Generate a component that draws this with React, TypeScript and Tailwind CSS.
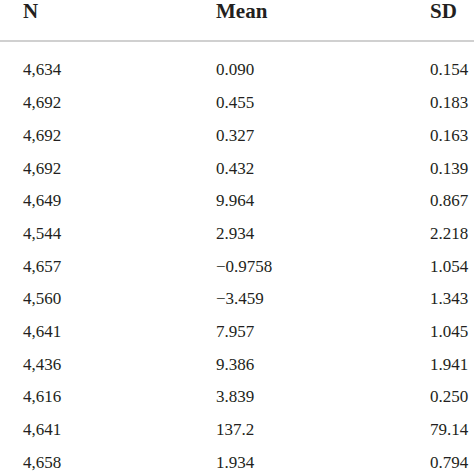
import React from 'react';

const rows = [
  ['4,634', '0.090', '0.154'],
  ['4,692', '0.455', '0.183'],
  ['4,692', '0.327', '0.163'],
  ['4,692', '0.432', '0.139'],
  ['4,649', '9.964', '0.867'],
  ['4,544', '2.934', '2.218'],
  ['4,657', '\u22120.9758', '1.054'],
  ['4,560', '\u22123.459', '1.343'],
  ['4,641', '7.957', '1.045'],
  ['4,436', '9.386', '1.941'],
  ['4,616', '3.839', '0.250'],
  ['4,641', '137.2', '79.14'],
  ['4,658', '1.934', '0.794'],
];

const App = () => {
  return (
    <div
      className="w-[474px] h-[474px] overflow-hidden bg-white text-[#231f20]"
      style={{ fontFamily: '"Liberation Serif", "Times New Roman", serif' }}
    >
      {/* header */}
      <div className="h-[42px] border-b-2 border-[#d0d0d0] pl-[23px] grid grid-cols-[193px_214px_1fr] text-[21px] leading-[22px] font-bold">
        <div>N</div>
        <div>Mean</div>
        <div>SD</div>
      </div>

      {/* body */}
      <div className="pt-[11.6px] pl-[23px]">
        {rows.map((r, i) => (
          <div key={i} className="h-[32.7px] grid grid-cols-[193px_214px_1fr] items-center text-[17px] leading-[17px]">
            <div>{r[0]}</div>
            <div>{r[1]}</div>
            <div>{r[2]}</div>
          </div>
        ))}
      </div>
    </div>
  );
};

export default App;
